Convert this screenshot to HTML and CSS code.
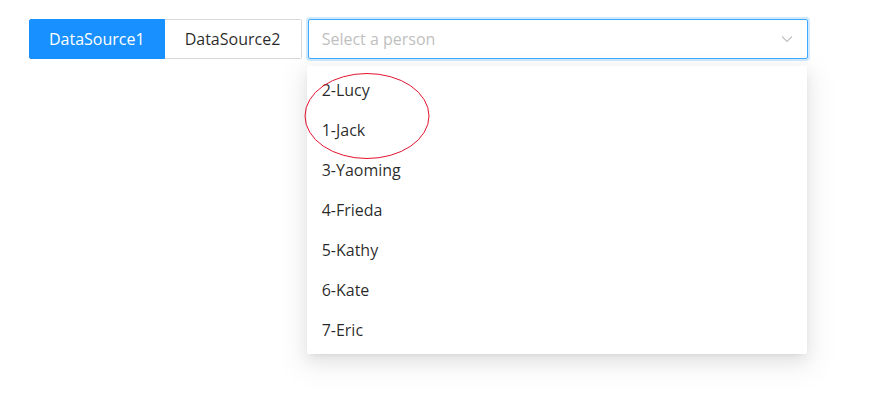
FILE: index.html
```html
<!DOCTYPE html>
<html>
	<head>
		<meta charset="utf-8" />
		<title>Select</title>
	<link rel="stylesheet" href="styles.css">
	</head>
	<body>
	<div class="page">
		<div class="toolbar">
			<div class="radio-group">
				<label class="radio-btn checked">DataSource1</label>
				<label class="radio-btn">DataSource2</label>
			</div>
			<div class="select">
				<div class="select-box">
					<span class="placeholder">Select a person</span>
					<svg class="arrow" width="12" height="12" viewBox="0 0 12 12"><path d="M1 3.5 L6 8.5 L11 3.5" fill="none" stroke="#bfbfbf" stroke-width="1.1"/></svg>
				</div>
				<div class="dropdown">
					<div class="option">2-Lucy</div>
					<div class="option">1-Jack</div>
					<div class="option">3-Yaoming</div>
					<div class="option">4-Frieda</div>
					<div class="option">5-Kathy</div>
					<div class="option">6-Kate</div>
					<div class="option">7-Eric</div>
				</div>
				<svg class="mark" width="130" height="90" viewBox="0 0 130 90"><ellipse cx="62" cy="45" rx="62" ry="42.5" fill="none" stroke="#e3132f" stroke-width="1"/></svg>
			</div>
		</div>
	</div>
	</body>
</html>
```

FILE: styles.css
```css
body{
	margin: 0;
	background: #fff;
	font-family: "Segoe UI", "Open Sans", "Noto Sans", sans-serif;
	font-size: 16px;
	color: rgba(0,0,0,0.85);
}
.page{
	box-sizing: border-box;
	min-height: 398px;
	padding: 19px 29px;
}
.toolbar{
	display: flex;
	gap: 6px;
}
.radio-group{
	display: flex;
}
.radio-btn{
	box-sizing: border-box;
	height: 40px;
	line-height: 38px;
	padding: 0 19px;
	border: 1px solid #d9d9d9;
	background: #fff;
}
.radio-btn + .radio-btn{
	padding: 0 20px 0 20px;
	border-left: 0;
	border-radius: 0 2px 2px 0;
	width: 137px;
}
.radio-btn.checked{
	background: #1890ff;
	border-color: #1890ff;
	color: #fff;
	border-radius: 2px 0 0 2px;
}
.select{
	position: relative;
	width: 500px;
}
.select-box{
	box-sizing: border-box;
	height: 40px;
	display: flex;
	align-items: center;
	justify-content: space-between;
	padding: 0 14px 0 13px;
	border: 1px solid #40a9ff;
	border-radius: 2px;
	box-shadow: 0 0 0 2px rgba(24,144,255,0.2);
}
.placeholder{
	color: #bfbfbf;
}
.dropdown{
	position: absolute;
	top: 47px;
	left: -1px;
	width: 500px;
	padding: 4px 0;
	background: #fff;
	border-radius: 2px;
	box-shadow: 0 3px 6px -4px rgba(0,0,0,0.12), 0 6px 16px 0 rgba(0,0,0,0.08), 0 9px 28px 8px rgba(0,0,0,0.05);
}
.option{
	height: 40px;
	line-height: 40px;
	padding: 0 15px;
}
.mark{
	position: absolute;
	top: 52px;
	left: -3px;
	overflow: visible;
}
```
